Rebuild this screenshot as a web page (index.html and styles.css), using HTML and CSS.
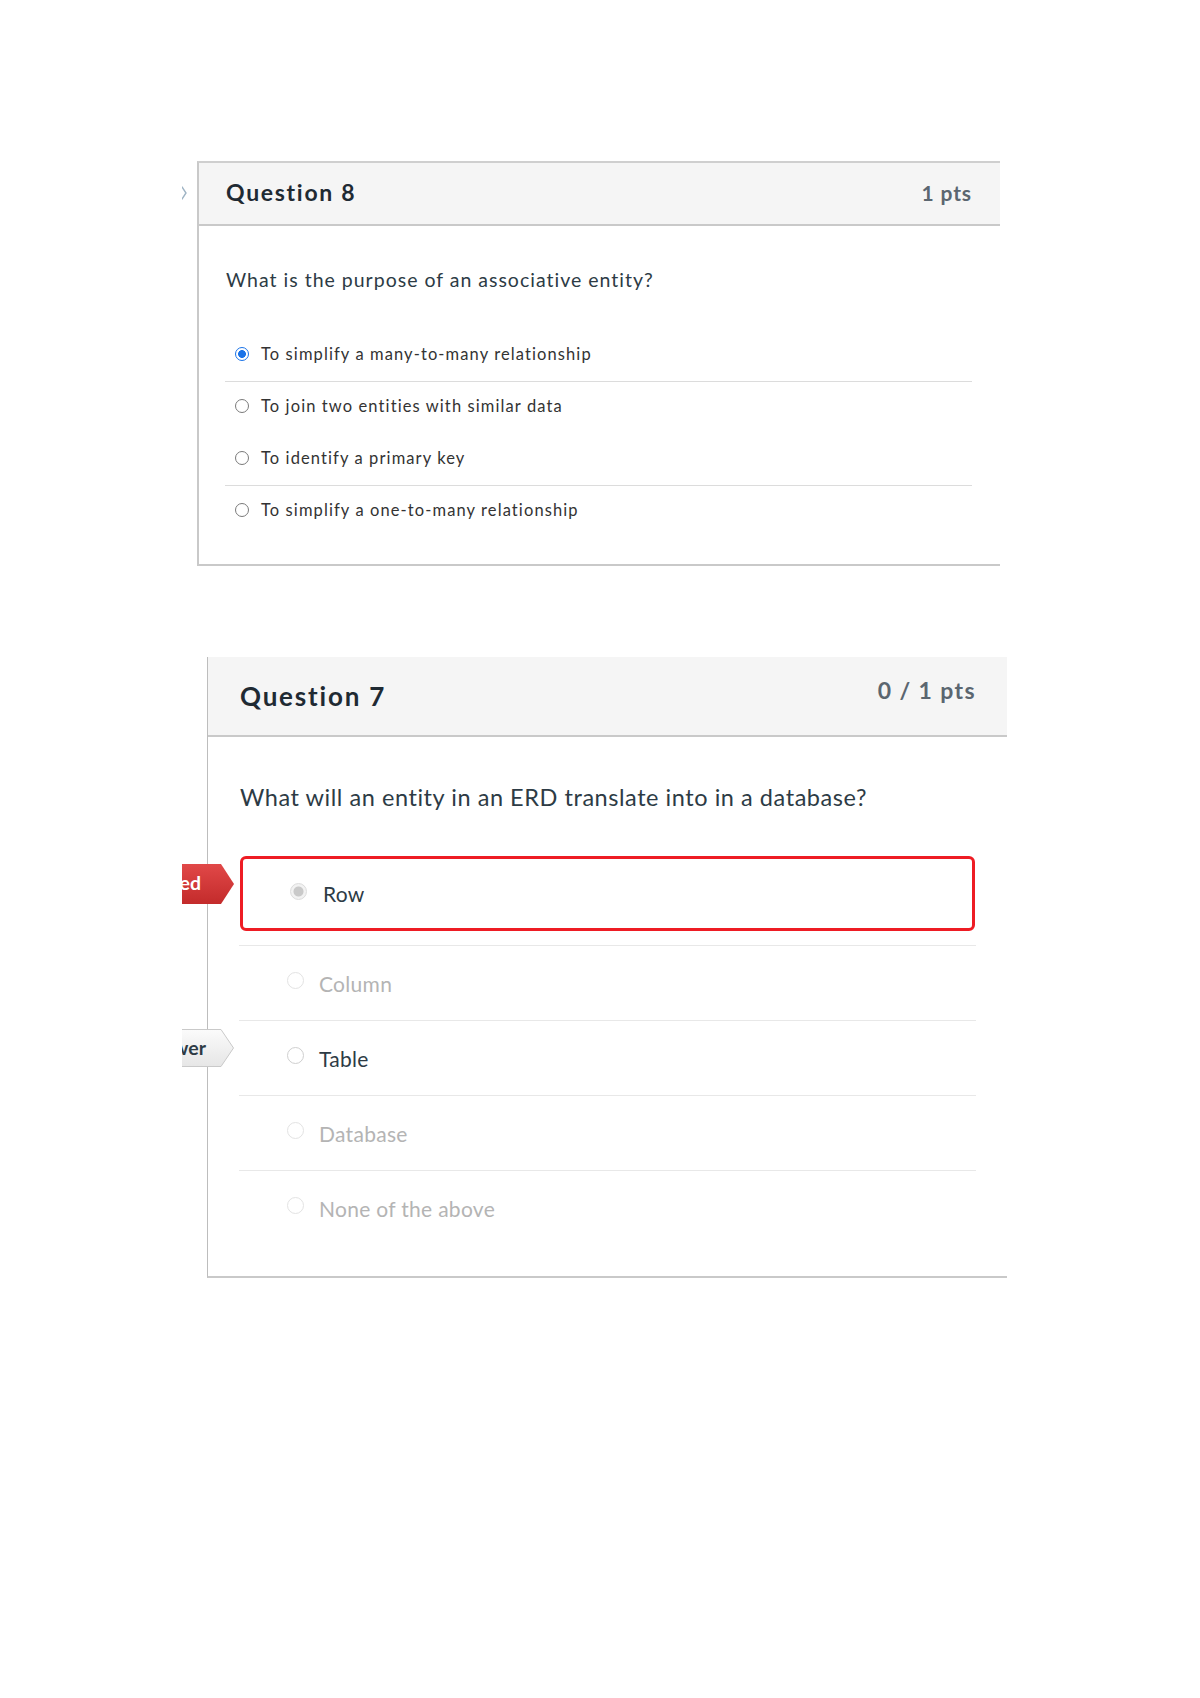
FILE: index.html
```html
<!DOCTYPE html>
<html lang="en">
<head>
<meta charset="utf-8">
<title>Quiz results</title>
<link rel="stylesheet" href="styles.css">
</head>
<body>
<div class="page">
  <section class="quiz-card q8">
    <header class="qhead">
      <svg class="nav-chevron" width="8" height="16" viewBox="0 0 8 16" aria-hidden="true"><path d="M2 2 L6 8 L2 14" fill="none" stroke="#9fb4c4" stroke-width="1.4" stroke-linecap="round"/></svg>
      <h2 class="qtitle">Question 8</h2>
      <span class="qpts">1 pts</span>
    </header>
    <div class="qbody">
      <p class="qtext">What is the purpose of an associative entity?</p>
      <ul class="opts">
        <li class="opt sep"><span class="radio checked"></span><span>To simplify a many-to-many relationship</span></li>
        <li class="opt"><span class="radio"></span><span>To join two entities with similar data</span></li>
        <li class="opt sep"><span class="radio"></span><span>To identify a primary key</span></li>
        <li class="opt"><span class="radio"></span><span>To simplify a one-to-many relationship</span></li>
      </ul>
    </div>
  </section>

  <section class="quiz-card q7">
    <header class="qhead big">
      <h2 class="qtitle">Question 7</h2>
      <span class="qpts">0 / 1 pts</span>
    </header>
    <div class="qbody big">
      <p class="qtext">What will an entity in an ERD translate into in a database?</p>
      <ul class="answers">
        <li class="answer chosen">
          <div class="badge wrong"><span>You Answered</span></div>
          <div class="answer-box"><span class="dradio filled"></span><span class="atext dark">Row</span></div>
        </li>
        <li class="answer"><span class="dradio"></span><span class="atext">Column</span></li>
        <li class="answer">
          <div class="badge right">
            <svg class="badge-shape" width="140" height="38" viewBox="0 0 140 38" preserveAspectRatio="none" aria-hidden="true">
              <defs><linearGradient id="bg" x1="0" y1="0" x2="0" y2="1"><stop offset="0" stop-color="#fbfbfb"/><stop offset="1" stop-color="#e6e6e6"/></linearGradient></defs>
              <polygon points="0.5,0.5 127,0.5 139.5,19 127,37.5 0.5,37.5" fill="url(#bg)" stroke="#c9c9c9" stroke-width="1"/>
            </svg>
            <span>Correct Answer</span>
          </div>
          <span class="dradio ring"></span><span class="atext dark">Table</span>
        </li>
        <li class="answer"><span class="dradio"></span><span class="atext">Database</span></li>
        <li class="answer last"><span class="dradio"></span><span class="atext">None of the above</span></li>
      </ul>
    </div>
  </section>
</div>
</body>
</html>
```
FILE: styles.css
```css
* { box-sizing: border-box; }
html, body { margin: 0; padding: 0; background: #fff; }
body { font-family: Lato, "Open Sans", "Liberation Sans", sans-serif; color: #2d3b45; }

.page {
  margin-left: 182px;
  width: 1018px;
  min-height: 1698px;
  overflow: hidden;
  padding-top: 161px;
}

.quiz-card {
  position: relative;
  background: #fff;
  border-left: 2px solid #c9c9c9;
  border-bottom: 2px solid #c9c9c9;
}

.q8 { margin-left: 15px; width: 803px; border-top: 2px solid #cfcfcf; }
.q7 { margin-left: 25px; width: 800px; margin-top: 91px; border-left-width: 1px; border-left-color: #bdbdbd; }

.qhead {
  position: relative;
  display: flex;
  align-items: center;
  justify-content: space-between;
  height: 63px;
  padding: 0 28px 3px 27px;
  background: #f5f5f5;
  border-bottom: 2px solid #c9c9c9;
}
.qhead.big { height: 80px; padding: 0 31px 0 32px; }

.nav-chevron { position: absolute; left: -19px; top: 22px; }

.qtitle { margin: 0; font-size: 23px; font-weight: 700; color: #1f2a33; letter-spacing: 1.7px; }
.qhead.big .qtitle { font-size: 26px; letter-spacing: 1.8px; }
.qpts { font-size: 21px; font-weight: 700; color: #5b6670; letter-spacing: 0.9px; }
.qhead.big .qpts { font-size: 23px; letter-spacing: 1.4px; margin-bottom: 12px; }

.qbody { padding: 42px 28px 26px 27px; }
.qbody.big { padding: 45px 31px 31px 32px; }

.qtext { margin: 0; font-size: 19.5px; line-height: 24px; color: #2d3b45; letter-spacing: 1px; }
.qbody.big .qtext { font-size: 23.5px; line-height: 30px; letter-spacing: 0.55px; }

.opts { list-style: none; margin: 38px 0 0 -1px; padding: 0; }
.opt {
  display: flex;
  align-items: center;
  gap: 12px;
  padding: 14px 0 17px 10px;
  line-height: 20px;
  font-size: 16.5px;
  letter-spacing: 1.1px;
  color: #333;
  border-bottom: 1px solid transparent;
}
.opt.sep { border-bottom-color: #dcdcdc; }

.radio {
  width: 14px; height: 14px;
  border-radius: 50%;
  border: 1px solid #7a7a7a;
  background: #fff;
  flex: none;
}
.radio.checked {
  border: 1.5px solid #1a73e8;
  background: radial-gradient(circle, #1a73e8 0 3.6px, #fff 4.2px);
}

.answers { list-style: none; margin: 44px 0 0 -1px; padding: 0; }
.answer {
  position: relative;
  display: flex;
  align-items: center;
  height: 75px;
  padding-left: 48px;
  border-bottom: 1px solid #e8e8e8;
}
.answer.last { height: 74px; border-bottom: 0; }
.answer.chosen { height: 90px; padding: 0 0 14px 0; display: block; }

.answer-box {
  display: flex;
  align-items: center;
  height: 75px;
  margin-left: 1px;
  margin-right: 1px;
  padding-left: 47px;
  border: 3px solid #ee1c24;
  border-radius: 6px;
}

.dradio {
  width: 17px; height: 17px;
  border-radius: 50%;
  border: 1px solid #e3e3e3;
  background: #fff;
  flex: none;
  margin-bottom: 5px;
}
.dradio.ring { border-color: #cfcfcf; }
.dradio.filled {
  border-color: #dcdcdc;
  background: radial-gradient(circle, #c9c9c9 0 4.5px, #f2f2f2 5.5px);
}

.atext { margin-left: 15px; font-size: 21px; letter-spacing: 0.3px; color: #b4b4b4; }
.atext.dark { color: #2d3b45; }
.answer-box .atext { margin-left: 16px; }

.badge {
  position: absolute;
  right: calc(100% + 5px);
  top: 8px;
  width: 140px;
  display: flex;
  align-items: center;
  justify-content: flex-end;
  padding-right: 33px;
  font-size: 19.5px;
  font-weight: 700;
  white-space: nowrap;
}
.badge.wrong {
  height: 40px;
  color: #fff;
  background: linear-gradient(#e14848, #c32b2b);
  clip-path: polygon(0 0, 127px 0, 140px 50%, 127px 100%, 0 100%);
  padding-bottom: 4px;
}
.badge.right {
  top: 8px;
  height: 38px;
  color: #2d3b45;
  padding-right: 28px;
  padding-bottom: 2px;
}
.badge-shape { position: absolute; left: 0; top: 0; }
.badge.right span { position: relative; }
```
